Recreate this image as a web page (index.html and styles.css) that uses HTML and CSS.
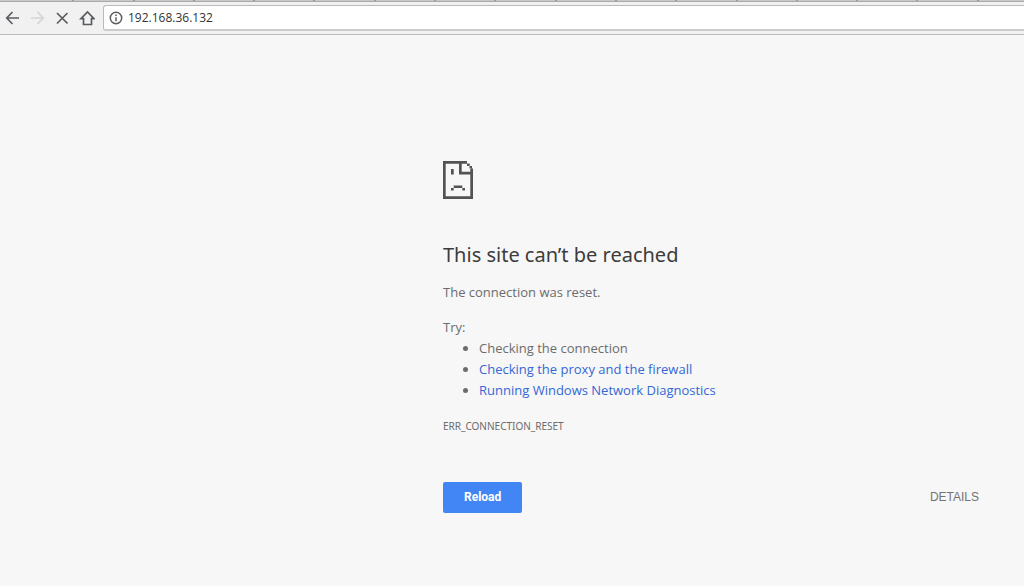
FILE: index.html
```html
<!DOCTYPE html>
<html lang="en">
<head>
<meta charset="utf-8">
<meta name="viewport" content="width=device-width, initial-scale=1">
<title>192.168.36.132</title>
<link rel="stylesheet" href="styles.css">
</head>
<body>
<header class="browser">
  <div class="tabs" aria-hidden="true">
    <span></span><span></span><span></span><span></span><span></span><span></span><span></span><span></span><span></span><span></span><span></span><span></span><span></span><span></span><span></span><span></span><span></span>
  </div>
  <div class="toolbar">
    <nav class="nav">
      <button class="tool" type="button" aria-label="Back"><svg viewBox="0 0 16 16"><path d="M15 8H3.500M8.500 2L2.700 8l5.800 6"/></svg></button>
      <button class="tool" type="button" aria-label="Forward" disabled><svg viewBox="0 0 16 16"><path d="M2 8h11.500M8.500 2L14.300 8l-5.800 6"/></svg></button>
      <button class="tool" type="button" aria-label="Stop"><svg viewBox="0 0 16 16"><path d="M3 3l10.500 10.500M13.500 3L3 13.500"/></svg></button>
      <button class="tool" type="button" aria-label="Home"><svg viewBox="0 0 16 16"><path d="M2 8.700L8.500 2 15 8.700H12.500v5.800h-8v-5.800z"/></svg></button>
    </nav>
    <div class="address">
      <svg class="info" viewBox="0 0 14 14" aria-hidden="true"><circle cx="7" cy="7" r="5.700"/><path d="M7 6.200v4M7 3.500v1.500"/></svg>
      <input class="url" type="text" aria-label="Address" value="192.168.36.132">
    </div>
  </div>
</header>
<main class="error">
  <svg class="sad" viewBox="0 0 30 38" aria-hidden="true">
    <path d="M0 0h24v2.700H18.700v8.100h8.600V7.500H30V38H0zM2.700 2.700v32.600h24.600V13.500H16V2.700z" fill-rule="evenodd"/>
    <path d="M24 2.500h2.700V5H24zM26.500 5H29v2.500h-2.500zM8 8h2.700v5.500H8zM10.700 24.500h8.600v2.500h-8.600zM8 27h2.700v2.500H8zM19.300 27H22v2.500h-2.700z"/>
  </svg>
  <h1 class="title">This site can’t be reached</h1>
  <p class="reason">The connection was reset.</p>
  <p class="try">Try:</p>
  <ul class="tips">
    <li>Checking the connection</li>
    <li><a href="#proxy">Checking the proxy and the firewall</a></li>
    <li><a href="#diagnostics">Running Windows Network Diagnostics</a></li>
  </ul>
  <p class="code">ERR_CONNECTION_RESET</p>
  <div class="actions">
    <button class="reload" type="button">Reload</button>
    <button class="details" type="button">DETAILS</button>
  </div>
</main>
</body>
</html>
```
FILE: styles.css
```css
* {
  box-sizing: border-box;
}

body {
  margin: 0;
  background: #f7f7f7;
  color: #6c6c6c;
  font: 13px/21px "Open Sans", sans-serif;
}

button {
  border: 0;
  background: none;
  cursor: pointer;
}

.browser {
  border-bottom: 1px solid #bbb;
  background: #f1f1f1;
  overflow: hidden;
}

.tabs {
  display: flex;
  height: 2px;
  margin-right: -15px;
  padding-left: 14px;
  border-bottom: 1px solid #aaa;
  background: #c8c8c8;
}

.tabs span {
  flex: 1;
  border-right: 2px solid #999;
}

.toolbar {
  display: flex;
  align-items: center;
  gap: 8px;
  padding: 3px 0;
}

.nav {
  display: flex;
  gap: 9px;
  padding-left: 4px;
}

.tool {
  display: flex;
  padding: 0;
  color: #5a5d60;
}

.tool:disabled {
  color: #d5d5d5;
}

.tool svg {
  width: 16px;
  height: 16px;
  fill: none;
  stroke: currentColor;
  stroke-width: 1.700;
}

.address {
  display: flex;
  flex: 1;
  align-items: center;
  gap: 5px;
  height: 26px;
  padding-left: 5px;
  border: 1px solid #bbb;
  border-right: 0;
  border-bottom: 2px solid #ccc;
  border-radius: 3px 0 0 3px;
  background: #fff;
}

.info {
  width: 14px;
  height: 14px;
  fill: none;
  stroke: #5a5d60;
  stroke-width: 1.500;
}

.url {
  flex: 1;
  min-width: 0;
  padding: 0;
  border: 0;
  outline: 0;
  background: none;
  color: #333;
  font: 12px/20px "Open Sans", sans-serif;
}

.error {
  max-width: 581px;
  margin-left: auto;
  padding: 126px 45px 40px 0;
}

.sad {
  display: block;
  width: 30px;
  height: 38px;
  fill: #535353;
}

.title {
  margin: 40px 0 11px;
  color: #3c3c3c;
  font-family: "Noto Sans", sans-serif;
  font-size: 20px;
  font-weight: 400;
  line-height: 32px;
}

.reason,
.try,
.tips {
  margin: 0;
}

.reason {
  margin-bottom: 14px;
}

.tips {
  padding-left: 36px;
}

.tips a {
  color: #3367d6;
  text-decoration: none;
}

.code {
  margin: 15px 0 45px;
  font-family: "Noto Sans", sans-serif;
  font-size: 10px;
}

.actions {
  display: flex;
  align-items: center;
  justify-content: space-between;
}

.reload {
  padding: 0 21px;
  border-radius: 2px;
  background: #4285f4;
  color: #fff;
  font: 700 12px/31px Roboto, sans-serif;
}

.details {
  padding: 0;
  color: #737373;
  font: 12px/31px "Liberation Sans", sans-serif;
}
```
